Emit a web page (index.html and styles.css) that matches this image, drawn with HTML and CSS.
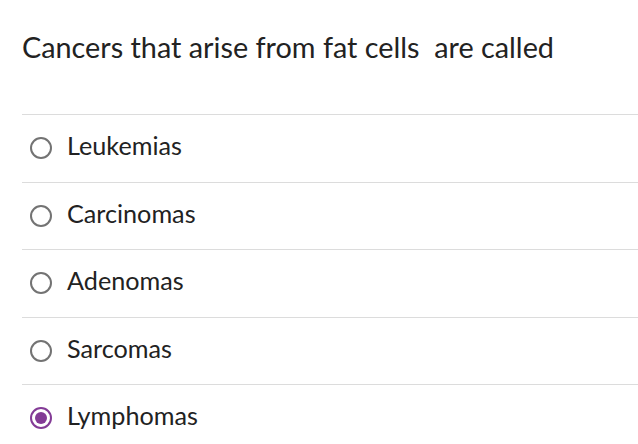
FILE: index.html
```html
<!DOCTYPE html>
<html>
<head>
<meta charset="utf-8">
<link rel="stylesheet" href="styles.css">
</head>
<body>
<div class="question">
  <h1 class="prompt">Cancers that arise from fat cells &nbsp;are called</h1>
  <ul class="answers">
    <li class="answer"><span class="radio"></span><span class="label">Leukemias</span></li>
    <li class="answer"><span class="radio"></span><span class="label">Carcinomas</span></li>
    <li class="answer"><span class="radio"></span><span class="label">Adenomas</span></li>
    <li class="answer"><span class="radio"></span><span class="label">Sarcomas</span></li>
    <li class="answer"><span class="radio checked"></span><span class="label">Lymphomas</span></li>
  </ul>
</div>
</body>
</html>
```
FILE: styles.css
```css
html, body {
  margin: 0;
  padding: 0;
  background: #fff;
}
body {
  font-family: Lato, "Liberation Sans", sans-serif;
  color: #222;
}
.question {
  padding: 0 0 0 22px;
}
.prompt {
  margin: 0;
  padding-top: 29px;
  height: 114px;
  box-sizing: border-box;
  font-size: 28.8px;
  font-weight: 400;
  line-height: 36px;
}
.answers {
  list-style: none;
  margin: 0;
  padding: 0;
}
.answer {
  border-top: 1px solid #dcdcdc;
  height: 67.5px;
  box-sizing: border-box;
  display: flex;
  align-items: center;
  padding-left: 8px;
  gap: 15px;
}
.radio {
  width: 22px;
  height: 22px;
  box-sizing: border-box;
  border: 2px solid #737373;
  border-radius: 50%;
  flex: none;
  position: relative;
}
.radio.checked {
  border-color: #833b96;
}
.radio.checked::after {
  content: "";
  position: absolute;
  left: 3px;
  top: 3px;
  width: 12px;
  height: 12px;
  border-radius: 50%;
  background: #833b96;
}
.label {
  font-size: 25.2px;
  line-height: 30px;
  padding-bottom: 6px;
}
```
